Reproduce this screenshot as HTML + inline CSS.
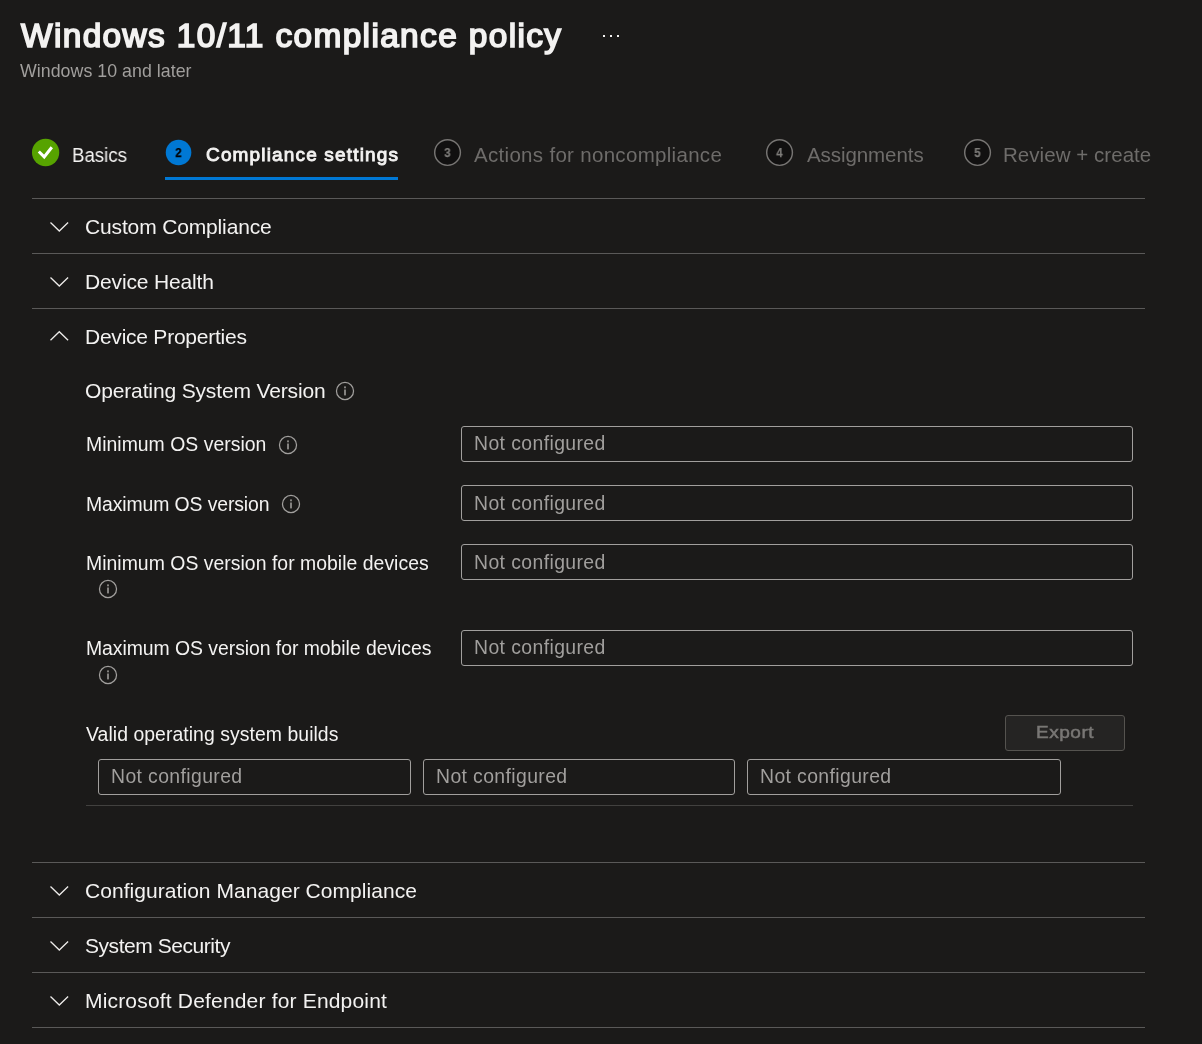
<!DOCTYPE html>
<html lang="en"><head><meta charset="utf-8">
<title>Windows 10/11 compliance policy</title>
<style>
*{box-sizing:border-box;margin:0;padding:0}
html,body{width:1202px;height:1044px;overflow:hidden;background:#1b1a19}
body{position:relative;font-family:"Liberation Sans",sans-serif;color:#f3f2f1}
.t{position:absolute;white-space:nowrap;line-height:1;will-change:transform}
.hl{position:absolute;height:1px;left:32px;width:1113px;background:#5a5958}
.circ{position:absolute;border-radius:50%}
.ring circle{fill:#111010;stroke:#777573;stroke-width:1.45}
.num{position:absolute;font-weight:700;font-size:13.2px;line-height:1;width:27px;text-align:center;top:145.6px;will-change:transform;color:#7e7c7a;-webkit-text-stroke:0.25px currentColor;transform:scaleX(0.86)}
.inp{position:absolute;border:1px solid #a19f9d;border-radius:3px;height:36px;background:#1b1a19}
svg{position:absolute;overflow:visible}
.chev{left:49.7px;width:19px;height:10px}
.chev path{fill:none;stroke:#edebe9;stroke-width:1.3}
.info{width:18px;height:18px}
.info circle.r{fill:none;stroke:#a19f9d;stroke-width:1.25}
.info rect{fill:#8a8886}
</style></head><body>
<!-- ellipsis -->
<svg style="left:602px;top:34px" width="20" height="4"><rect x="1" y="1" width="2" height="2" fill="#f3f2f1"/><rect x="8" y="1" width="2" height="2" fill="#f3f2f1"/><rect x="15" y="1" width="2" height="2" fill="#f3f2f1"/></svg>

<!-- wizard tabs -->
<svg style="left:32px;top:139px" width="27" height="27" viewBox="0 0 27 27"><circle cx="13.6" cy="13.5" r="13.65" fill="#57a300"/><path d="M6.8 12.5 L12.2 17.9 L19.8 8.2" fill="none" stroke="#ffffff" stroke-width="3"/></svg>
<svg style="left:165px;top:139px" width="27" height="27" viewBox="0 0 27 27"><circle cx="13.55" cy="13.5" r="12.8" fill="#0078d4"/></svg>
<div class="num" style="left:165.3px;color:#000">2</div>
<div style="position:absolute;left:165px;top:177px;width:233px;height:3px;background:#0078d4"></div>
<svg class="ring" style="left:434px;top:139px" width="27" height="27" viewBox="0 0 27 27"><circle cx="13.55" cy="13.5" r="12.85"/></svg><div class="num" style="left:433.5px">3</div>
<svg class="ring" style="left:766px;top:139px" width="27" height="27" viewBox="0 0 27 27"><circle cx="13.55" cy="13.5" r="12.85"/></svg><div class="num" style="left:765.5px">4</div>
<svg class="ring" style="left:964px;top:139px" width="27" height="27" viewBox="0 0 27 27"><circle cx="13.55" cy="13.5" r="12.85"/></svg><div class="num" style="left:963.5px">5</div>

<!-- section separators -->
<div class="hl" style="top:198px"></div>
<div class="hl" style="top:253px"></div>
<div class="hl" style="top:308px"></div>
<div class="hl" style="top:805px;left:86px;width:1047px;background:#42413f"></div>
<div class="hl" style="top:862px"></div>
<div class="hl" style="top:917px"></div>
<div class="hl" style="top:972px"></div>
<div class="hl" style="top:1027px"></div>

<!-- chevrons -->
<svg class="chev" style="top:222px" viewBox="0 0 19 10"><path d="M0.5 0.5 L9.3 9.05 L18.1 0.5"/></svg>
<svg class="chev" style="top:277px" viewBox="0 0 19 10"><path d="M0.5 0.5 L9.3 9.05 L18.1 0.5"/></svg>
<svg class="chev" style="top:331px" viewBox="0 0 19 10"><path d="M0.5 9.3 L9.3 0.75 L18.1 9.3"/></svg>
<svg class="chev" style="top:886px" viewBox="0 0 19 10"><path d="M0.5 0.5 L9.3 9.05 L18.1 0.5"/></svg>
<svg class="chev" style="top:941px" viewBox="0 0 19 10"><path d="M0.5 0.5 L9.3 9.05 L18.1 0.5"/></svg>
<svg class="chev" style="top:996px" viewBox="0 0 19 10"><path d="M0.5 0.5 L9.3 9.05 L18.1 0.5"/></svg>

<!-- info icons -->
<svg class="info" style="left:336.0px;top:381.7px" viewBox="0 0 18 18"><circle class="r" cx="9" cy="9" r="8.55"/><rect x="8.05" y="4.4" width="1.9" height="1.9"/><rect x="8.05" y="7.5" width="1.9" height="5.9"/></svg>
<svg class="info" style="left:279.0px;top:435.5px" viewBox="0 0 18 18"><circle class="r" cx="9" cy="9" r="8.55"/><rect x="8.05" y="4.4" width="1.9" height="1.9"/><rect x="8.05" y="7.5" width="1.9" height="5.9"/></svg>
<svg class="info" style="left:282.0px;top:494.6px" viewBox="0 0 18 18"><circle class="r" cx="9" cy="9" r="8.55"/><rect x="8.05" y="4.4" width="1.9" height="1.9"/><rect x="8.05" y="7.5" width="1.9" height="5.9"/></svg>
<svg class="info" style="left:99.0px;top:579.8px" viewBox="0 0 18 18"><circle class="r" cx="9" cy="9" r="8.55"/><rect x="8.05" y="4.4" width="1.9" height="1.9"/><rect x="8.05" y="7.5" width="1.9" height="5.9"/></svg>
<svg class="info" style="left:99.0px;top:666.0px" viewBox="0 0 18 18"><circle class="r" cx="9" cy="9" r="8.55"/><rect x="8.05" y="4.4" width="1.9" height="1.9"/><rect x="8.05" y="7.5" width="1.9" height="5.9"/></svg>

<!-- text boxes -->
<div class="inp" style="left:461px;top:426px;width:672px"></div>
<div class="inp" style="left:461px;top:485px;width:672px"></div>
<div class="inp" style="left:461px;top:544px;width:672px"></div>
<div class="inp" style="left:461px;top:630px;width:672px"></div>
<div class="inp" style="left:98px;top:759px;width:313px"></div>
<div class="inp" style="left:423px;top:759px;width:312px"></div>
<div class="inp" style="left:747px;top:759px;width:314px"></div>
<!-- export button (disabled) -->
<div class="inp" style="left:1005px;top:715px;width:120px;border-color:#55534f;background:#252423"></div>

<!-- text -->
<div class="t" id="title" style="left:21.46px;top:19.23px;font-size:33.4px;color:#f3f2f1;letter-spacing:1.380px;-webkit-text-stroke:1.7px #f3f2f1">Windows 10/11 compliance policy</div>
<div class="t" id="sub" style="left:20.16px;top:62.83px;font-size:17.8px;color:#a19f9d;letter-spacing:0.028px">Windows 10 and later</div>
<div class="t" id="tab1" style="left:72.00px;top:144.65px;font-size:20.5px;color:#f3f2f1;transform-origin:0 0;transform:scaleX(0.9086)">Basics</div>
<div class="t" id="tab2" style="left:205.64px;top:145.42px;font-size:19.0px;color:#f3f2f1;letter-spacing:1.160px;-webkit-text-stroke:0.9px #f3f2f1">Compliance settings</div>
<div class="t" id="tab3" style="left:474.16px;top:144.65px;font-size:20.5px;color:#6e6c6a;letter-spacing:0.308px">Actions for noncompliance</div>
<div class="t" id="tab4" style="left:807.06px;top:144.65px;font-size:20.5px;color:#6e6c6a;letter-spacing:-0.072px">Assignments</div>
<div class="t" id="tab5" style="left:1003.02px;top:144.65px;font-size:20.5px;color:#6e6c6a;letter-spacing:0.051px">Review + create</div>
<div class="t" id="s1" style="left:85.08px;top:216.22px;font-size:21px;color:#f3f2f1;letter-spacing:-0.146px">Custom Compliance</div>
<div class="t" id="s2" style="left:85.10px;top:271.22px;font-size:21px;color:#f3f2f1;letter-spacing:-0.150px">Device Health</div>
<div class="t" id="s3" style="left:85.10px;top:326.22px;font-size:21px;color:#f3f2f1;letter-spacing:-0.236px">Device Properties</div>
<div class="t" id="s4" style="left:85.08px;top:380.22px;font-size:21px;color:#f3f2f1;letter-spacing:-0.141px">Operating System Version</div>
<div class="t" id="s5" style="left:85.08px;top:880.22px;font-size:21px;color:#f3f2f1;letter-spacing:0.052px">Configuration Manager Compliance</div>
<div class="t" id="s6" style="left:84.84px;top:935.22px;font-size:21px;color:#f3f2f1;letter-spacing:-0.450px">System Security</div>
<div class="t" id="s7" style="left:85.10px;top:990.22px;font-size:21px;color:#f3f2f1;letter-spacing:0.180px">Microsoft Defender for Endpoint</div>
<div class="t" id="l1" style="left:86.00px;top:434.58px;font-size:19.4px;color:#f3f2f1;letter-spacing:0.021px">Minimum OS version</div>
<div class="t" id="l2" style="left:86.00px;top:494.58px;font-size:19.4px;color:#f3f2f1;letter-spacing:-0.106px">Maximum OS version</div>
<div class="t" id="l3" style="left:86.00px;top:553.58px;font-size:19.4px;color:#f3f2f1;letter-spacing:0.030px">Minimum OS version for mobile devices</div>
<div class="t" id="l4" style="left:86.00px;top:638.58px;font-size:19.4px;color:#f3f2f1;letter-spacing:-0.045px">Maximum OS version for mobile devices</div>
<div class="t" id="l5" style="left:85.90px;top:724.58px;font-size:19.4px;color:#f3f2f1;letter-spacing:0.058px">Valid operating system builds</div>
<div class="t" id="n1" style="left:474.40px;top:433.58px;font-size:19.4px;color:#a19f9d;letter-spacing:0.402px">Not configured</div>
<div class="t" id="n2" style="left:474.40px;top:493.58px;font-size:19.4px;color:#a19f9d;letter-spacing:0.402px">Not configured</div>
<div class="t" id="n3" style="left:474.40px;top:552.58px;font-size:19.4px;color:#a19f9d;letter-spacing:0.402px">Not configured</div>
<div class="t" id="n4" style="left:474.40px;top:637.58px;font-size:19.4px;color:#a19f9d;letter-spacing:0.402px">Not configured</div>
<div class="t" id="n5" style="left:111.12px;top:766.58px;font-size:19.4px;color:#a19f9d;letter-spacing:0.388px">Not configured</div>
<div class="t" id="n6" style="left:436.12px;top:766.58px;font-size:19.4px;color:#a19f9d;letter-spacing:0.388px">Not configured</div>
<div class="t" id="n7" style="left:760.12px;top:766.58px;font-size:19.4px;color:#a19f9d;letter-spacing:0.388px">Not configured</div>
<div class="t" id="ex" style="left:1036.00px;top:723.96px;font-size:17.3px;color:#797775;transform-origin:0 0;transform:scaleX(1.1040);letter-spacing:0.45px;-webkit-text-stroke:0.5px #797775">Export</div>
</body></html>
